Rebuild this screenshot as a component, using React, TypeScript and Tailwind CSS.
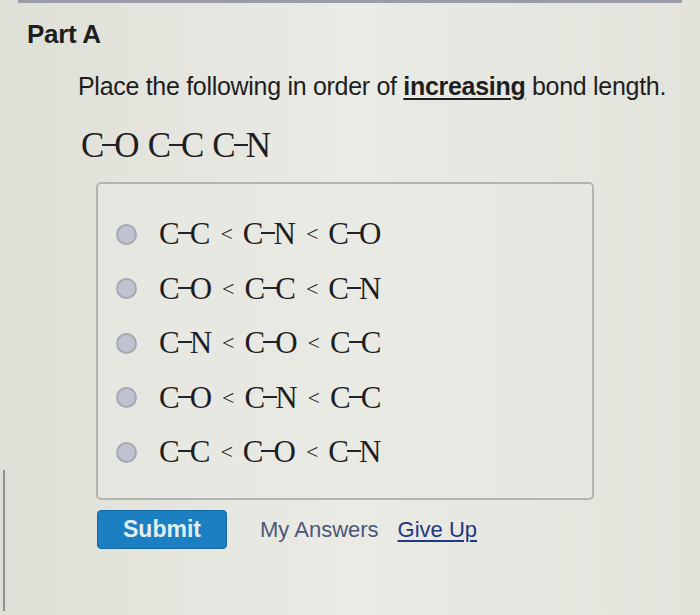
import React from "react";

const sans = "font-['Liberation_Sans',Arial,sans-serif]";
const serif = "font-['Liberation_Serif','DejaVu_Serif',serif]";

function Bond({ a, b }: { a: string; b: string }) {
  return (
    <span className="inline-flex items-center">
      <span>{a}</span>
      <span className="mx-[-2px] inline-block h-[2px] w-[14px] translate-y-[-1px] bg-[#23232b]" />
      <span>{b}</span>
    </span>
  );
}

const options: [string, string][][] = [
  [["C", "C"], ["C", "N"], ["C", "O"]],
  [["C", "O"], ["C", "C"], ["C", "N"]],
  [["C", "N"], ["C", "O"], ["C", "C"]],
  [["C", "O"], ["C", "N"], ["C", "C"]],
  [["C", "C"], ["C", "O"], ["C", "N"]],
];

export default function App() {
  return (
    <div className="relative flex h-[615px] w-[700px] flex-col overflow-hidden bg-gradient-to-r from-[#dedfd6] via-[#ebebe6] to-[#e3e3dc] text-[#1e1e22]">
      <div className="mx-[18px] h-[3px] bg-[#9b9caa]" />

      <div className="pl-[27px] pt-[16px]">
        <h2 className={`${sans} text-[26px] font-bold leading-[30px] tracking-[-0.3px]`}>Part A</h2>
      </div>

      <div className="pl-[78px] pt-[22px]">
        <p className={`${sans} text-[25px] leading-[30px] tracking-[-0.3px]`}>
          Place the following in order of <span className="font-bold underline decoration-2 underline-offset-[3px]">increasing</span> bond length.
        </p>

        <div className={`${serif} mt-[27px] flex gap-[8px] pl-[3px] text-[35px] leading-[36px]`}>
          <Bond a="C" b="O" />
          <Bond a="C" b="C" />
          <Bond a="C" b="N" />
        </div>

        <div className="mt-[18px] ml-[18px] h-[318px] w-[498px] rounded-[5px] border-2 border-[#b3b4b2] bg-[#eaeae5]/60 pl-[18px] pt-[35px]">
          <div className="flex flex-col gap-[24.5px]">
            {options.map((row, i) => (
              <label key={i} className="flex h-[30px] items-center gap-[22px]">
                <span className="h-[21px] w-[21px] shrink-0 rounded-full border-2 border-[#a6a8b6] bg-[#bfc2cf]" />
                <span className={`${serif} flex items-center gap-[10px] text-[31px] leading-[30px]`}>
                  {row.map((bond, j) => (
                    <React.Fragment key={j}>
                      {j > 0 && <span className="text-[22px] leading-[30px]">&lt;</span>}
                      <Bond a={bond[0]} b={bond[1]} />
                    </React.Fragment>
                  ))}
                </span>
              </label>
            ))}
          </div>
        </div>

        <div className={`${sans} ml-[19px] mt-[10px] flex items-center`}>
          <button className="h-[39px] w-[130px] rounded-[4px] border border-[#1569a3] bg-[#1b7fc1] text-[23px] font-bold text-[#e3eef3]">
            Submit
          </button>
          <span className="ml-[33px] text-[22px] text-[#4b5779]">My Answers</span>
          <a className="ml-[19px] text-[22px] text-[#1f3885] underline decoration-2 underline-offset-[3px]">Give Up</a>
        </div>
      </div>

      <div className="pointer-events-none absolute bottom-[4px] left-[3px] top-[470px] w-[2px] bg-[#8e8f94]" />
    </div>
  );
}
